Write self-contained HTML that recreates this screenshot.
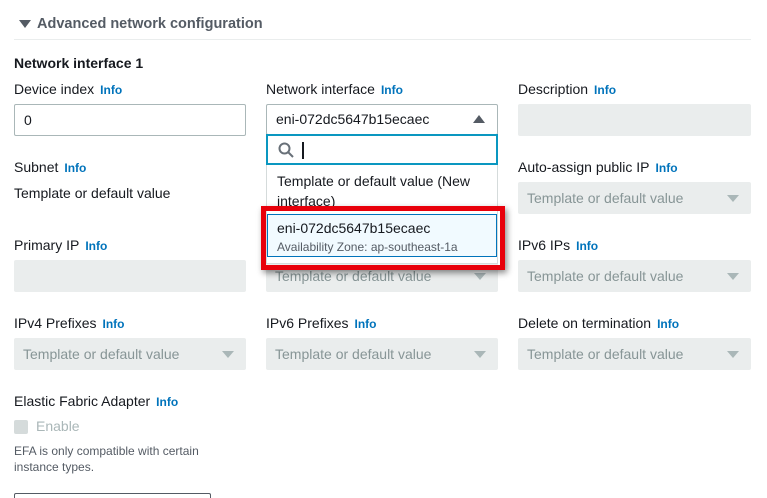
<!DOCTYPE html>
<html style="overflow:hidden;height:498px"><head><style>
body{margin:0;width:767px;height:498px;overflow:hidden;background:#fff;font-family:"Liberation Sans",sans-serif;color:#16191f;position:relative;font-size:14px}
.a{position:absolute}
.lbl{font-size:14px;color:#16191f;white-space:nowrap}
.info{color:#0073bb;font-weight:bold;font-size:12px;margin-left:6px}
.inp{position:absolute;height:30px;border:1px solid #aab7b8;border-radius:2px;box-sizing:border-box;background:#fff;padding:0 9px;line-height:28px}
.dis{position:absolute;height:32px;background:#eaeded;border-radius:2px;box-sizing:border-box;padding:0 9px;line-height:32px;color:#879596}
.dis .tri{position:absolute;right:12px;top:13px;width:0;height:0;border-left:6px solid transparent;border-right:6px solid transparent;border-top:7px solid #aab7b8}
</style></head><body>
<div class="a" style="left:19px;top:20px;width:0;height:0;border-left:6px solid transparent;border-right:6px solid transparent;border-top:8px solid #545b64"></div>
<div class="a" style="left:37px;top:16px;font-weight:bold;font-size:14.5px;color:#545b64">Advanced network configuration</div>
<div class="a" style="left:14px;top:39px;width:737px;height:1px;background:#eaeded"></div>
<div class="a" style="left:14px;top:55px;font-weight:bold;font-size:14px">Network interface 1</div>

<div class="a lbl" style="left:14px;top:81px">Device index<span class="info">Info</span></div>
<div class="inp" style="left:14px;top:104px;width:232px;height:32px;line-height:30px">0</div>
<div class="a lbl" style="left:266px;top:81px">Network interface<span class="info">Info</span></div>
<div class="a lbl" style="left:518px;top:81px">Description<span class="info">Info</span></div>
<div class="dis" style="left:518px;top:104px;width:233px"></div>

<div class="a lbl" style="left:14px;top:159px">Subnet<span class="info">Info</span></div>
<div class="a lbl" style="left:14px;top:185px">Template or default value</div>
<div class="a lbl" style="left:518px;top:159px">Auto-assign public IP<span class="info">Info</span></div>
<div class="dis" style="left:518px;top:182px;width:233px">Template or default value<div class="tri"></div></div>

<div class="a lbl" style="left:14px;top:237px">Primary IP<span class="info">Info</span></div>
<div class="dis" style="left:14px;top:260px;width:232px"></div>
<div class="dis" style="left:266px;top:260px;width:232px">Template or default value<div class="tri"></div></div>
<div class="a lbl" style="left:518px;top:237px">IPv6 IPs<span class="info">Info</span></div>
<div class="dis" style="left:518px;top:260px;width:233px">Template or default value<div class="tri"></div></div>

<div class="a lbl" style="left:14px;top:315px">IPv4 Prefixes<span class="info">Info</span></div>
<div class="dis" style="left:14px;top:338px;width:232px">Template or default value<div class="tri"></div></div>
<div class="a lbl" style="left:266px;top:315px">IPv6 Prefixes<span class="info">Info</span></div>
<div class="dis" style="left:266px;top:338px;width:232px">Template or default value<div class="tri"></div></div>
<div class="a lbl" style="left:518px;top:315px">Delete on termination<span class="info">Info</span></div>
<div class="dis" style="left:518px;top:338px;width:233px">Template or default value<div class="tri"></div></div>

<div class="a lbl" style="left:14px;top:393px">Elastic Fabric Adapter<span class="info">Info</span></div>
<div class="a" style="left:14px;top:420px;width:14px;height:14px;background:#d5dbdb;border-radius:2px"></div>
<div class="a" style="left:36px;top:418px;color:#aab7b8">Enable</div>
<div class="a" style="left:14px;top:443px;font-size:12px;color:#545b64;line-height:16px">EFA is only compatible with certain<br>instance types.</div>
<div class="a" style="left:14px;top:493px;width:195px;height:5px;border:1px solid #545b64;border-bottom:none;border-radius:2px 2px 0 0"></div>

<div class="inp" style="left:266px;top:104px;width:232px;height:31px">eni-072dc5647b15ecaec
<div class="a" style="right:12px;top:10px;width:0;height:0;border-left:6px solid transparent;border-right:6px solid transparent;border-bottom:8px solid #545b64"></div></div>
<div class="a" style="left:266px;top:134px;width:232px;height:130px;background:#fff;border:1px solid #d5dbdb;box-sizing:border-box"></div>
<div class="a" style="left:266px;top:134px;width:232px;height:31px;border:2px solid #0a97c0;box-sizing:border-box;background:#fff">
<svg class="a" style="left:9px;top:5px" width="18" height="18" viewBox="0 0 18 18"><circle cx="7.5" cy="7.5" r="5" fill="none" stroke="#687078" stroke-width="2"/><path d="M11 11l5 5" stroke="#687078" stroke-width="2"/></svg>
<div class="a" style="left:34px;top:6px;width:2px;height:17px;background:#16191f"></div></div>
<div class="a" style="left:277px;top:171px;line-height:20px">Template or default value (New<br>interface)</div>
<div class="a" style="left:261px;top:206px;width:244px;height:64px;box-sizing:border-box;border:5px solid #e8000b;box-shadow:2px 3px 6px rgba(0,0,0,.45)"></div>
<div class="a" style="left:267px;top:214px;width:230px;height:43px;box-sizing:border-box;border:1px solid #0073bb;background:#f1faff"></div>
<div class="a" style="left:277px;top:220px">eni-072dc5647b15ecaec</div>
<div class="a" style="left:277px;top:240px;font-size:12px;color:#545b64">Availability Zone: ap-southeast-1a</div>
</body></html>
